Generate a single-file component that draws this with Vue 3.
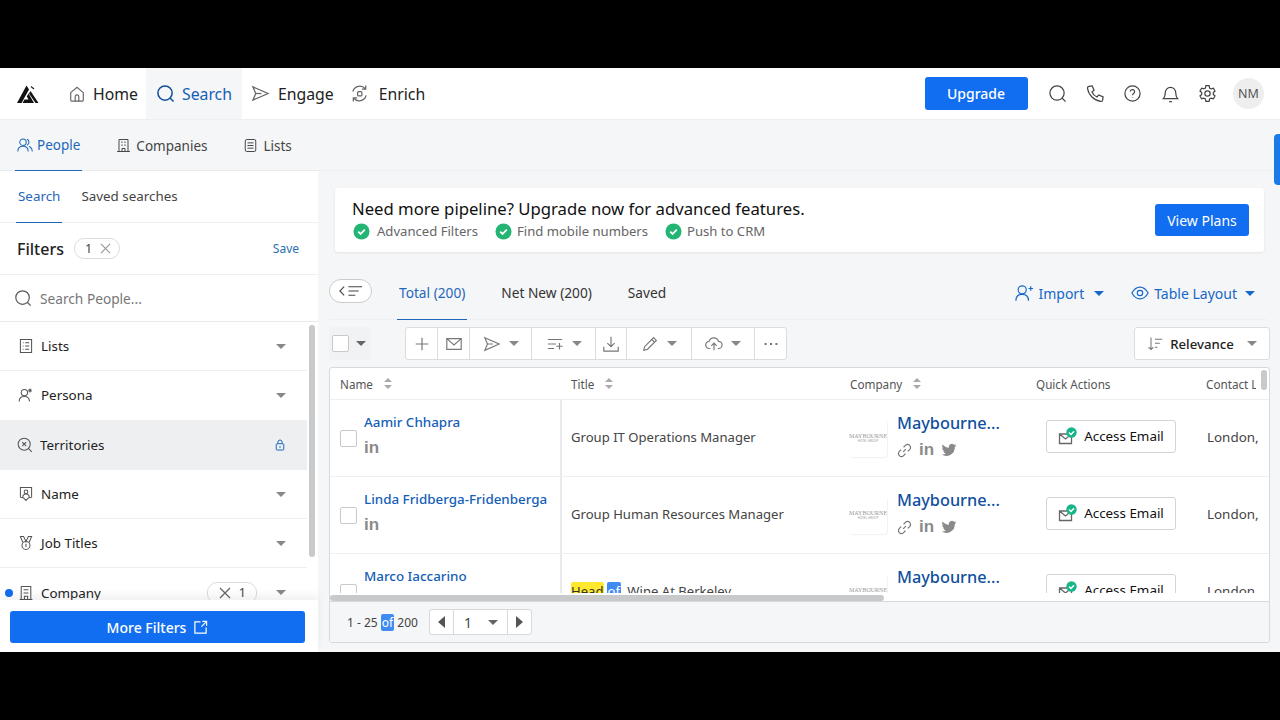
<template>
  <div class="screen">
    <div class="letterbox"></div>
    <div class="app">
      <header class="topbar">
        <svg class="logo" viewBox="0 0 24 20" width="24" height="20">
          <path d="M10.5 1.500 L13 5.500 L5.500 19 H1 Z" fill="#111" />
          <path d="M12.500 9.500 L18 19 H6.500 L8.500 15.500 H12.500 L10.800 12.500 Z" fill="#111" />
          <path d="M14.500 7 L22.500 19 H19.500 L13 9.500 Z" fill="#111" />
          <path d="M15 2.500 L18 5" stroke="#222" stroke-width="1.2" />
        </svg>
        <nav class="mainnav">
          <a class="navitem">
            <svg viewBox="0 0 20 20" width="18" height="18" class="ic"><path d="M3 8.5 10 2.5l7 6V17a1 1 0 0 1-1 1H4a1 1 0 0 1-1-1Z" /><path d="M8 18v-5a2 2 0 0 1 4 0v5" /></svg>
            <span>Home</span>
          </a>
          <a class="navitem active">
            <svg viewBox="0 0 20 20" width="19" height="19" class="ic"><circle cx="9.5" cy="9.5" r="7.5" /><path d="m15 15 3.5 3.5" /></svg>
            <span>Search</span>
          </a>
          <a class="navitem">
            <svg viewBox="0 0 20 20" width="19" height="19" class="ic"><path d="M2 3 18 10 2 17 5 10Z" /><path d="M5 10h6" /></svg>
            <span>Engage</span>
          </a>
          <a class="navitem">
            <svg viewBox="0 0 20 20" width="19" height="19" class="ic"><path d="M3 8a7.5 7.5 0 0 1 13-3M17 12a7.5 7.5 0 0 1-13 3" /><path d="M16.5 1.5V5.5H12.5M3.5 18.5V14.5H7.5" /><rect x="8" y="8" width="4.5" height="4.5" rx="1" /></svg>
            <span>Enrich</span>
          </a>
        </nav>
        <div class="topright">
          <button class="upgrade">Upgrade</button>
          <svg viewBox="0 0 20 20" width="19" height="19" class="ic dark"><circle cx="9.5" cy="9.5" r="7.5" /><path d="m15 15 3.5 3.5" /></svg>
          <svg viewBox="0 0 20 20" width="19" height="19" class="ic dark"><path d="M3 2.5 6.5 2l2 4.5L6.3 8.4c1 2.3 2.8 4.2 5.2 5.3l2-2.2 4.5 2-.5 3.5c-.2 1-1 1.5-2 1.4C8.5 17.5 2.5 11.5 1.6 4.5 1.5 3.5 2 2.7 3 2.5Z" /></svg>
          <svg viewBox="0 0 20 20" width="19" height="19" class="ic dark"><circle cx="10" cy="10" r="8" /><path d="M7.8 8a2.2 2.2 0 1 1 3.4 1.9c-.8.5-1.2 1-1.2 1.9M10 14v.6" /></svg>
          <svg viewBox="0 0 20 20" width="19" height="19" class="ic dark"><path d="M2.5 15.500h15c-1.500-1.500-2-3-2-6.500a5.500 5.500 0 0 0-11 0c0 3.500-.5 5-2 6.500ZM8.500 18.500h3" /></svg>
          <svg viewBox="0 0 20 20" width="19" height="19" class="ic dark"><circle cx="10" cy="10" r="2.8" /><path d="M8.3 1.800h3.400l.5 2.400 1.700 1 2.300-.8 1.700 3-1.800 1.600v2l1.800 1.600-1.700 3-2.300-.8-1.700 1-.5 2.400H8.300l-.5-2.400-1.700-1-2.300.8-1.700-3L3.900 11V9L2.100 7.400l1.700-3 2.300.8 1.700-1Z" /></svg>
          <span class="avatar">NM</span>
        </div>
      </header>

      <div class="workspace">
        <aside class="sidebar">
          <div class="subnav">
            <a class="subitem active">
              <svg viewBox="0 0 20 20" width="16" height="16" class="ic"><circle cx="7.5" cy="6.5" r="4" /><path d="M1 18c0-4 2.500-6.500 6.500-6.500S14 14 14 18M12.500 2.800a4 4 0 0 1 0 7.400M15 12c2.500 1 4 3 4 6" /></svg>
              People
            </a>
            <a class="subitem">
              <svg viewBox="0 0 20 20" width="15" height="15" class="ic"><path d="M4 18V2h12v16M1.500 18h17M8 18v-4h4v4M7 5.500h2M11 5.500h2M7 9.500h2M11 9.500h2" /></svg>
              Companies
            </a>
            <a class="subitem">
              <svg viewBox="0 0 20 20" width="15" height="15" class="ic"><rect x="3" y="2" width="14" height="16" rx="2" /><path d="M6 6.500h8M6 10h8M6 13.500h8" /></svg>
              Lists
            </a>
          </div>
          <div class="panel">
            <div class="paneltabs">
              <a class="ptab active">Search</a>
              <a class="ptab">Saved searches</a>
            </div>
            <div class="filterhead">
              <strong>Filters</strong>
              <span class="pill">
                1
                <svg viewBox="0 0 12 12" width="11" height="11" class="ic x"><path d="m1 1 10 10M11 1 1 11" /></svg>
              </span>
              <a class="save">Save</a>
            </div>
            <div class="peoplesearch">
              <svg viewBox="0 0 20 20" width="18" height="18" class="ic"><circle cx="9.5" cy="9.5" r="7.5" /><path d="m15 15 3.500 3.500" /></svg>
              <span>Search People...</span>
            </div>
            <div class="filterwrap">
              <div class="filterlist">
                <div v-for="f in filters" :key="f.name" class="filterrow" :class="{ locked: f.locked }">
                  <i v-if="f.dot" class="dot"></i>
                  <svg viewBox="0 0 20 20" width="16" height="16" class="ic"><path :d="f.icon" /></svg>
                  <span class="fname">{{ f.name }}</span>
                  <span v-if="f.count" class="pill small">
                    <svg viewBox="0 0 12 12" width="12" height="12" class="ic x"><path d="m1 1 10 10M11 1 1 11" /></svg>
                    {{ f.count }}
                  </span>
                  <svg v-if="f.locked" class="lock" viewBox="0 0 12 14" width="10" height="12"><rect x="1.5" y="5.5" width="9" height="7.5" rx="1" /><path d="M3.500 5.500V3.500a2.500 2.500 0 0 1 5 0v2M6 8.500v2" /></svg>
                  <i v-else class="caret"></i>
                </div>
              </div>
              <div class="sidescroll"><i></i></div>
            </div>
            <div class="morewrap">
              <button class="more">
                More Filters
                <svg viewBox="0 0 16 16" width="15" height="15" class="ic white"><path d="M8 2H2v12h12V8M9 7l5.500-5.500M10 1.500h4.500V6" /></svg>
              </button>
            </div>
          </div>
        </aside>

        <main class="content">
          <div class="contentbar"></div>
          <div class="contentbody">
            <section class="banner">
              <div class="bannertext">
                <h2>Need more pipeline? Upgrade now for advanced features.</h2>
                <ul>
                  <li v-for="b in perks" :key="b">
                    <svg viewBox="0 0 18 18" width="17" height="17"><circle cx="9" cy="9" r="8.5" fill="#22b573" /><path d="m5.500 9.200 2.500 2.400 4.500-4.600" fill="none" stroke="#fff" stroke-width="1.8" /></svg>
                    {{ b }}
                  </li>
                </ul>
              </div>
              <button class="viewplans">View Plans</button>
            </section>

            <div class="tabsrow">
              <button class="collapse">
                <svg viewBox="0 0 30 14" width="26" height="12" class="ic"><path d="M7 2 2 7l5 5M12 2h16M12 7h12M12 12h8" /></svg>
              </button>
              <a class="ttab active">Total (200)</a>
              <a class="ttab">Net New (200)</a>
              <a class="ttab">Saved</a>
              <div class="tabactions">
                <a class="tact">
                  <svg viewBox="0 0 20 20" width="18" height="18" class="ic blue"><circle cx="8" cy="6.5" r="4.5" /><path d="M1 18.500c0-4.500 3-7 7-7s7 2.500 7 7M15 5h5M17.500 2.500v5" /></svg>
                  Import <i class="caret bluecaret wide"></i>
                </a>
                <a class="tact">
                  <svg viewBox="0 0 20 20" width="18" height="18" class="ic blue"><path d="M1 10c2.500-4.500 5.500-6.500 9-6.500s6.500 2 9 6.500c-2.500 4.500-5.500 6.500-9 6.500S3.500 14.500 1 10Z" /><circle cx="10" cy="10" r="3" /></svg>
                  Table Layout <i class="caret bluecaret"></i>
                </a>
              </div>
            </div>

            <div class="toolsrow">
              <div class="selectall"><i class="box"></i><i class="caret darkcaret"></i></div>
              <div class="toolgroup">
                <button v-for="t in tools" :key="t.key" class="tool" :style="{ width: t.w + 'px' }">
                  <svg viewBox="0 0 20 20" width="18" height="18" class="ic grey"><path :d="t.icon" /></svg>
                  <i v-if="t.caret" class="caret"></i>
                </button>
              </div>
              <button class="relevance">
                <svg viewBox="0 0 20 20" width="16" height="16" class="ic grey"><path d="M5 2v15M2 14l3 3 3-3M10 4h9M10 9h6M10 14h3" /></svg>
                Relevance <i class="caret"></i>
              </button>
            </div>

            <section class="tablecard">
              <div class="grid head">
                <div class="hcell first">Name <i class="sort"></i></div>
                <div class="hcell">Title <i class="sort"></i></div>
                <div class="hcell">Company <i class="sort"></i></div>
                <div class="hcell">Quick Actions</div>
                <div class="hcell clip">Contact Location</div>
              </div>
              <div class="tbody">
                <div v-for="p in people" :key="p.name" class="grid row">
                  <div class="namecell">
                    <i class="box rowbox"></i>
                    <div class="namestack">
                      <a class="pname">{{ p.name }}</a>
                      <span class="in">in</span>
                    </div>
                  </div>
                  <div class="titlecell">
                    <template v-if="p.hl"><mark class="yellow">Head</mark> <mark class="bluehl">of</mark> Wine At Berkeley</template>
                    <template v-else>{{ p.title }}</template>
                  </div>
                  <div class="companycell">
                    <div class="clogo"><span>MAYBOURNE</span><small>HOTEL GROUP</small></div>
                    <div class="cstack">
                      <a class="cname">Maybourne...</a>
                      <div class="socials">
                        <svg viewBox="0 0 16 16" width="15" height="15" class="ic grey"><path d="M6.500 9.500 9.500 6.500M7 4.500l2-2a3 3 0 0 1 4.500 4.500l-2 2M9 11.500l-2 2A3 3 0 0 1 2.500 9l2-2" /></svg>
                        <span class="in">in</span>
                        <svg viewBox="0 0 24 24" width="16" height="16" fill="#8a8a8a"><path d="M23 5c-.8.4-1.700.6-2.600.7.900-.6 1.600-1.400 2-2.500-.9.500-1.800.9-2.900 1.100A4.500 4.500 0 0 0 11.800 8.500C8 8.300 4.600 6.500 2.400 3.700c-1.200 2-.6 4.700 1.400 6-.7 0-1.400-.2-2-.6 0 2.200 1.500 4.100 3.600 4.600-.7.200-1.400.2-2 .1.600 1.800 2.300 3.100 4.200 3.100A9.100 9.100 0 0 1 1 18.800 12.800 12.800 0 0 0 20.700 7.400c.9-.6 1.700-1.400 2.300-2.400Z" /></svg>
                      </div>
                    </div>
                  </div>
                  <div class="actioncell">
                    <button class="access">
                      <svg viewBox="0 0 20 18" width="20" height="18"><path d="M1.500 7h12v9.500h-12Z M1.500 7l6 5 6-5" fill="none" stroke="#666" stroke-width="1.3" /><circle cx="13.5" cy="5.5" r="5.2" fill="#18b58a" /><path d="m11 5.500 2 1.900 3-3.200" fill="none" stroke="#fff" stroke-width="1.4" /></svg>
                      Access Email
                    </button>
                  </div>
                  <div class="loccell">London,</div>
                </div>
              </div>
              <div class="hscroll"><i></i></div>
              <i class="vscroll"></i>
              <footer class="pager">
                <span class="range">1 - 25 <mark class="bluehl">of</mark> 200</span>
                <div class="pagectl">
                  <button class="pbtn"><i class="tri left"></i></button>
                  <div class="pnum">1 <i class="caret darkcaret"></i></div>
                  <button class="pbtn"><i class="tri right"></i></button>
                </div>
              </footer>
            </section>
          </div>
          <i class="pagethumb"></i>
        </main>
      </div>
    </div>
    <div class="letterbox"></div>
  </div>
</template>

<script setup>
const filters = [
  { name: 'Lists', icon: 'M3 2h14v16H3ZM6 6h1M9 6h5M6 10h1M9 10h5M6 14h1M9 14h5' },
  { name: 'Persona', icon: 'M8 3a4 4 0 1 1 0 8 4 4 0 0 1 0-8ZM1.500 18c0-4 2.500-6 6.500-6s6 2 6.500 6M15 2v5M13 3.500l4 2M17 3.500l-4 2' },
  { name: 'Territories', locked: true, icon: 'M9 1.500a7.500 7.500 0 1 1 0 15 7.500 7.500 0 0 1 0-15ZM6.500 6.500l5 5M11.500 6.500l-5 5M14.500 14.500l4 4' },
  { name: 'Name', icon: 'M3 2h14v12l-4 1-3 3-3-3-4-1ZM10 5a2.300 2.300 0 1 1 0 4.600A2.300 2.300 0 0 1 10 5ZM6 14c0-2.500 1.500-4 4-4s4 1.500 4 4' },
  { name: 'Job Titles', icon: 'M6 9 3 2h4l3 6 3-6h4l-3 7M10 8a5 5 0 1 1 0 10 5 5 0 0 1 0-10ZM10 11v4' },
  { name: 'Company', dot: true, count: 1, icon: 'M4 18V2h12v16M2 18h16M8 18v-4h4v4M7 6h6M7 10h6' }
]

const perks = ['Advanced Filters', 'Find mobile numbers', 'Push to CRM']

const tools = [
  { key: 'add', w: 32, icon: 'M10 3v14M3 10h14' },
  { key: 'mail', w: 32, icon: 'M2 4h16v12H2ZM2 4l8 7 8-7' },
  { key: 'send', w: 62, caret: true, icon: 'M2 3 18 10 2 17 5 10ZM5 10h6' },
  { key: 'list', w: 64, caret: true, icon: 'M2 5h16M2 10h9M2 15h7M15 9v7M11.500 12.500h7' },
  { key: 'download', w: 31, icon: 'M10 2v11M6 9l4 4 4-4M2 13v5h16v-5' },
  { key: 'edit', w: 65, caret: true, icon: 'M3 17l1-4L14 3l3 3L7 16ZM12 5l3 3' },
  { key: 'cloud', w: 63, caret: true, icon: 'M6 15H5a4 4 0 0 1-.5-8 5.500 5.500 0 0 1 10.500 0 4 4 0 0 1 0 8h-1M10 17V9M7 12l3-3 3 3' },
  { key: 'more', w: 31, icon: 'M3.500 9.500h1v1h-1ZM9.500 9.500h1v1h-1ZM15.500 9.500h1v1h-1Z' }
]

const people = [
  { name: 'Aamir Chhapra', title: 'Group IT Operations Manager' },
  { name: 'Linda Fridberga-Fridenberga', title: 'Group Human Resources Manager' },
  { name: 'Marco Iaccarino', hl: true }
]
</script>

<style>
html, body {
  margin: 0;
  background: #000;
  overflow: hidden;
}
</style>

<style scoped>
.screen {
  width: 1280px;
  height: 720px;
  display: flex;
  flex-direction: column;
  font-family: "Noto Sans", "Open Sans", "Liberation Sans", sans-serif;
  color: #222;
  font-size: 14px;
}
.letterbox {
  height: 68px;
  background: #000;
  flex: none;
}
.app {
  height: 584px;
  background: #f5f6f7;
  display: flex;
  flex-direction: column;
  overflow: hidden;
}
i {
  font-style: normal;
}
button {
  font-family: inherit;
  border: none;
  cursor: pointer;
}
.ic {
  fill: none;
  stroke: currentColor;
  stroke-width: 1.3;
  flex: none;
}
.ic.dark { color: #444; }
.ic.grey { color: #777; }
.ic.blue { color: #1667c9; }
.ic.white { color: #fff; }

/* top bar */
.topbar {
  height: 52px;
  flex: none;
  background: #fff;
  border-bottom: 1px solid #eeeff0;
  box-sizing: border-box;
  display: flex;
  align-items: stretch;
  padding-left: 16px;
  padding-right: 16px;
}
.logo {
  align-self: center;
  margin-right: 19px;
}
.mainnav {
  display: flex;
}
.navitem {
  display: flex;
  align-items: center;
  gap: 8px;
  padding: 0 9px;
  font-size: 15.8px;
  color: #222;
}
.navitem:first-child { padding-right: 8px; gap: 7px; }
.navitem:last-child { padding-left: 7.5px; gap: 9.5px; }
.navitem .ic { color: #666; }
.navitem.active {
  background: #f5f6f7;
  color: #1460b4;
  padding: 0 10px 0 10px;
  gap: 7px;
}
.navitem.active .ic { color: #0f4f9e; stroke-width: 1.6; }
.topright {
  margin-left: auto;
  display: flex;
  align-items: center;
  gap: 18.5px;
}
.upgrade {
  width: 103px;
  height: 33px;
  background: #116ef0;
  color: #fff;
  border-radius: 3px;
  font-size: 14px;
  font-weight: 500;
  margin-right: 2px;
}
.avatar {
  width: 31px;
  height: 31px;
  margin-left: -2.5px;
  border-radius: 50%;
  background: #eeeeef;
  color: #555;
  font-size: 12.5px;
  display: flex;
  align-items: center;
  justify-content: center;
}

.workspace {
  flex: 1;
  display: flex;
  min-height: 0;
}

/* sidebar */
.sidebar {
  width: 318px;
  flex: none;
  display: flex;
  flex-direction: column;
}
.subnav {
  height: 51px;
  flex: none;
  display: flex;
  padding-left: 15px;
  gap: 32px;
  box-sizing: border-box;
  border-bottom: 1px solid #e8e9ea;
}
.subitem {
  display: flex;
  align-items: center;
  gap: 5px;
  padding: 0 2px;
  font-size: 13.5px;
  color: #444;
  margin-bottom: -1px;
}
.subitem.active {
  color: #1f66bd;
  border-bottom: 1px solid #1f66bd;
  gap: 4px;
}
.panel {
  flex: 1;
  background: #fff;
  display: flex;
  flex-direction: column;
  min-height: 0;
}
.paneltabs {
  height: 52px;
  flex: none;
  display: flex;
  gap: 17px;
  padding-left: 16px;
  box-sizing: border-box;
  border-bottom: 1px solid #eeeff0;
  font-size: 13.4px;
}
.ptab {
  display: flex;
  align-items: center;
  padding: 0 2px 2px;
  color: #444;
  margin-bottom: -1px;
}
.ptab.active {
  color: #1f66bd;
  border-bottom: 1px solid #1f66bd;
  justify-content: center;
}
.filterhead {
  height: 52px;
  flex: none;
  display: flex;
  align-items: center;
  padding: 0 19px 0 17px;
  border-bottom: 1px solid #eeeff0;
  box-sizing: border-box;
}
.filterhead strong {
  font-weight: 500;
  font-size: 16px;
  color: #222;
  margin-right: 10px;
}
.pill {
  display: inline-flex;
  align-items: center;
  gap: 8px;
  height: 19px;
  padding: 0 8px 0 10px;
  border: 1px solid #dcdcdc;
  border-radius: 10px;
  font-size: 12.5px;
  color: #444;
}
.pill .x {
  color: #999;
}
.pill.small {
  margin-left: auto;
  margin-right: 19px;
  padding: 0 10px 0 11px;
  gap: 8px;
  height: 20px;
  background: #fff;
}
.pill.small .x {
  margin: 0;
  color: #666;
}
.save {
  margin-left: auto;
  font-size: 12px;
  color: #2a6fb0;
}
.peoplesearch {
  height: 47px;
  flex: none;
  display: flex;
  align-items: center;
  gap: 8px;
  padding-left: 14px;
  border-bottom: 1px solid #e8e9ea;
  box-sizing: border-box;
  color: #777;
  font-size: 13.7px;
}
.peoplesearch .ic { color: #555; }
.filterwrap {
  flex: 1;
  min-height: 0;
  display: flex;
  overflow: hidden;
  position: relative;
}
.filterlist {
  width: 307px;
  flex: none;
}
.filterrow {
  height: 49.3px;
  display: flex;
  align-items: center;
  padding: 0 21px 0 18px;
  box-sizing: border-box;
  border-bottom: 1px solid #eeeff0;
  position: relative;
  font-size: 13.4px;
  color: #222;
}
.filterrow .ic {
  color: #555;
  margin-right: 7px;
}
.filterrow .pill .ic { margin-right: 0; color: #666; }
.filterrow.locked {
  background: #eeeff1;
  padding-left: 17px;
}
.fname { flex: none; }
.filterrow .caret,
.filterrow .lock { margin-left: auto; }
.filterrow .pill.small + .caret { margin-left: 0; }
.lock {
  fill: none;
  stroke: #1f66bd;
  stroke-width: 1.2;
  margin-right: 1px;
}
.dot {
  position: absolute;
  left: 5px;
  top: 50%;
  margin-top: -4px;
  width: 8px;
  height: 8px;
  border-radius: 50%;
  background: #116ef0;
}
.caret {
  display: inline-block;
  width: 0;
  height: 0;
  border-left: 5px solid transparent;
  border-right: 5px solid transparent;
  border-top: 5px solid #888;
  flex: none;
}
.bluecaret { border-top-color: #1667c9; margin-left: 3px; }
.bluecaret.wide { margin-left: 5px; }
.darkcaret { border-top-color: #666; }
.sidescroll {
  width: 6px;
  margin-left: 2px;
  padding-top: 3px;
}
.sidescroll i {
  display: block;
  height: 232px;
  background: #c8c9ca;
  border-radius: 3px;
}
.morewrap {
  height: 52px;
  flex: none;
  box-sizing: border-box;
  padding: 11px 13px 9px 10px;
  background: #fff;
  box-shadow: 0 -5px 8px rgba(0, 0, 0, 0.06);
  z-index: 1;
}
.more {
  width: 100%;
  height: 32px;
  background: #116ef0;
  color: #fff;
  border-radius: 3px;
  font-size: 14px;
  font-weight: 500;
  display: flex;
  align-items: center;
  justify-content: center;
  gap: 7px;
}

/* main */
.content {
  flex: 1;
  min-width: 0;
  position: relative;
  display: flex;
  flex-direction: column;
}
.contentbar {
  height: 50px;
  flex: none;
  border-bottom: 1px solid #eeeff0;
}
.contentbody {
  flex: 1;
  min-height: 0;
  display: flex;
  flex-direction: column;
  padding: 17px 10px 9px 11px;
}
.banner {
  margin: 0 6px 0 6px;
  height: 64px;
  flex: none;
  box-sizing: border-box;
  padding: 0 16px 0 17px;
  background: #fff;
  border-radius: 3px;
  box-shadow: 0 1px 3px rgba(0, 0, 0, 0.08);
  display: flex;
  align-items: center;
  justify-content: space-between;
}
.banner h2 {
  margin: -1px 0 1px;
  font-size: 16.7px;
  font-weight: 400;
  line-height: 22px;
  color: #111;
}
.banner ul {
  list-style: none;
  margin: 0;
  padding: 0;
  display: flex;
  gap: 16px;
  color: #666;
  font-size: 13.1px;
  line-height: 20px;
}
.banner li {
  display: flex;
  align-items: center;
  gap: 7px;
  padding-left: 1px;
}
.banner li + li { gap: 5px; }
.viewplans {
  width: 94px;
  height: 32px;
  margin-right: -1px;
  background: #116ef0;
  color: #fff;
  border-radius: 3px;
  font-size: 14px;
}
.tabsrow {
  height: 50px;
  flex: none;
  margin-top: 17px;
  margin-right: 4px;
  display: flex;
  align-items: stretch;
  border-bottom: 1px solid #eeeff0;
}
.collapse {
  align-self: center;
  margin: 0 25px 6px 0;
  width: 43px;
  height: 24px;
  border-radius: 12px;
  background: #fff;
  border: 1px solid #ccc;
  display: flex;
  align-items: center;
  justify-content: center;
  padding: 0;
  color: #444;
  flex: none;
}
.ttab {
  display: flex;
  align-items: center;
  padding: 0 2px 4px;
  margin-right: 32px;
  font-size: 13.7px;
  color: #333;
  margin-bottom: -1px;
}
.ttab.active {
  color: #1f66bd;
  border-bottom: 1px solid #1f66bd;
}
.tabactions {
  margin-left: auto;
  display: flex;
  gap: 27px;
  padding-right: 11px;
  padding-bottom: 2px;
}
.tact {
  display: flex;
  align-items: center;
  gap: 5px;
  color: #1667c9;
  font-size: 14px;
}
.toolsrow {
  height: 47px;
  flex: none;
  display: flex;
  align-items: flex-start;
  padding-top: 7px;
  box-sizing: border-box;
}
.selectall {
  width: 42px;
  height: 33px;
  display: flex;
  align-items: center;
  gap: 7px;
  padding-left: 3px;
  box-sizing: border-box;
  background: #f1f2f3;
  border-radius: 3px;
  margin-right: 34px;
}
.box {
  display: block;
  width: 17px;
  height: 17px;
  box-sizing: border-box;
  background: #fff;
  border: 1px solid #c9c9c9;
  border-radius: 2px;
  flex: none;
}
.toolgroup {
  display: flex;
  height: 33px;
  box-sizing: border-box;
  background: #fff;
  border: 1px solid #dcdcdc;
  border-radius: 3px;
}
.tool {
  height: 100%;
  background: none;
  padding: 0;
  display: flex;
  align-items: center;
  justify-content: center;
  gap: 8px;
  border-right: 1px solid #dcdcdc;
}
.tool:last-child { border-right: none; }
.relevance {
  margin-left: auto;
  width: 136px;
  height: 33px;
  box-sizing: border-box;
  background: #fff;
  border: 1px solid #dcdcdc;
  border-radius: 3px;
  display: flex;
  align-items: center;
  justify-content: center;
  gap: 7px;
  font-size: 13.2px;
  font-weight: 500;
  color: #222;
  padding: 0;
}
.relevance .caret { margin-left: 6px; }

/* table */
.tablecard {
  flex: 1;
  min-height: 0;
  position: relative;
  background: #fff;
  border: 1px solid #d8d9da;
  border-radius: 3px;
  display: flex;
  flex-direction: column;
  overflow: hidden;
}
.grid {
  display: grid;
  grid-template-columns: 232px 278px 186px 171px 1fr;
}
.head {
  height: 31px;
  flex: none;
  align-items: center;
  color: #555;
  font-size: 11.7px;
}
.hcell {
  display: flex;
  align-items: center;
  gap: 11px;
  padding-left: 9px;
  white-space: nowrap;
  overflow: hidden;
}
.hcell.first { padding-left: 10px; }
.hcell.clip { margin-right: 13px; }
.hcell:nth-child(3) { padding-left: 10px; }
.hcell:nth-child(4) { padding-left: 10px; }
.sort {
  width: 8px;
  height: 11px;
  flex: none;
  position: relative;
}
.sort::before,
.sort::after {
  content: "";
  position: absolute;
  left: 0;
  border-left: 4px solid transparent;
  border-right: 4px solid transparent;
}
.sort::before { top: 0; border-bottom: 4px solid #aaa; }
.sort::after { bottom: 0; border-top: 4px solid #aaa; }
.tbody {
  flex: 1;
  min-height: 0;
  overflow: hidden;
}
.row {
  height: 77px;
  border-top: 1px solid #eeeff0;
  box-sizing: border-box;
}
.namecell {
  display: flex;
  align-items: center;
  gap: 7px;
  padding-left: 10px;
  border-right: 2px solid #e8e9ea;
}
.namestack {
  display: flex;
  flex-direction: column;
  gap: 8px;
  margin-top: -6px;
}
.pname {
  color: #1560b8;
  font-size: 13.4px;
  font-weight: 500;
  white-space: nowrap;
}
.in {
  font-family: "Liberation Sans", sans-serif;
  font-weight: 700;
  font-size: 17px;
  line-height: 18px;
  color: #8a8a8a;
}
.titlecell {
  display: flex;
  align-items: center;
  gap: 3px;
  padding-left: 9px;
  padding-bottom: 2px;
  font-size: 13.1px;
  color: #444;
  white-space: pre;
}
.yellow {
  background: #ffe92e;
  color: #333;
  border-radius: 2px;
}
.bluehl {
  background: #3f8bf2;
  color: #fff;
  border-radius: 2px;
  padding: 0 1px;
}
.companycell {
  display: flex;
  align-items: center;
  gap: 10px;
  padding-left: 9px;
}
.clogo {
  width: 38px;
  height: 37px;
  flex: none;
  box-sizing: border-box;
  border-radius: 4px;
  box-shadow: 1px 1px 1px rgba(0, 0, 0, 0.06);
  display: flex;
  flex-direction: column;
  align-items: center;
  justify-content: center;
  color: #999;
  overflow: hidden;
}
.clogo span {
  font-family: "Liberation Serif", serif;
  font-size: 6px;
  line-height: 6px;
}
.clogo small {
  font-size: 3px;
  line-height: 4px;
}
.cstack {
  display: flex;
  flex-direction: column;
  gap: 6px;
  margin-top: -6px;
}
.cname {
  color: #0f4f9e;
  font-size: 16.3px;
  font-weight: 500;
  line-height: 24px;
  white-space: nowrap;
}
.socials {
  display: flex;
  align-items: center;
  gap: 7px;
  height: 18px;
}
.actioncell {
  display: flex;
  align-items: center;
  padding-left: 20px;
}
.access {
  width: 130px;
  height: 33px;
  margin-top: -4px;
  background: #fff;
  border: 1px solid #d4d4d4;
  border-radius: 3px;
  display: flex;
  align-items: center;
  justify-content: center;
  gap: 6px;
  font-size: 13.4px;
  color: #111;
  padding: 0;
}
.loccell {
  display: flex;
  align-items: center;
  padding-left: 10px;
  padding-bottom: 2px;
  font-size: 13.4px;
  color: #444;
  overflow: hidden;
  white-space: nowrap;
}
.hscroll {
  height: 9px;
  flex: none;
  box-sizing: border-box;
  padding-top: 2px;
  border-bottom: 1px solid #d8d9da;
}
.hscroll i {
  display: block;
  width: 554px;
  height: 6px;
  background: #c8c9ca;
  border-radius: 3px;
}
.vscroll {
  position: absolute;
  right: 2px;
  top: 2px;
  width: 6px;
  height: 20px;
  background: #c8c9ca;
  border-radius: 3px;
}
.pager {
  height: 40px;
  flex: none;
  background: #f5f6f7;
  display: flex;
  align-items: center;
  padding-left: 17px;
  gap: 11px;
  font-size: 12px;
  color: #444;
}
.pagectl {
  display: flex;
  height: 24px;
  background: #fff;
  border: 1px solid #d8d9da;
  border-radius: 3px;
}
.pbtn {
  width: 23px;
  background: none;
  padding: 0;
  display: flex;
  align-items: center;
  justify-content: center;
}
.pnum {
  width: 55px;
  border-left: 1px solid #d8d9da;
  border-right: 1px solid #d8d9da;
  display: flex;
  align-items: center;
  justify-content: space-between;
  padding: 0 9px 0 10px;
  box-sizing: border-box;
  font-size: 14px;
}
.tri {
  width: 0;
  height: 0;
  border-top: 6px solid transparent;
  border-bottom: 6px solid transparent;
}
.tri.left { border-right: 7px solid #555; }
.tri.right { border-left: 7px solid #555; }
.pagethumb {
  position: absolute;
  right: 0;
  top: 14px;
  width: 6px;
  height: 51px;
  background: #1a7be8;
  border-radius: 4px 0 0 4px;
}
</style>
